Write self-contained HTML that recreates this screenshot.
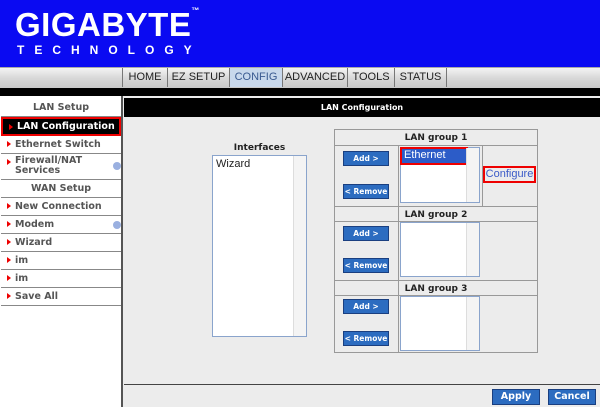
<!DOCTYPE html>
<html><head><style>
*{margin:0;padding:0;box-sizing:border-box}
body{width:600px;height:407px;overflow:hidden;background:#ececec;font-family:"DejaVu Sans","Liberation Sans",sans-serif;position:relative}
.a{position:absolute}
.hdr{left:0;top:0;width:600px;height:67px;background:#0a0af2}
.logo{left:15px;top:6px;color:#fff;font:bold 33px "Liberation Sans",sans-serif;letter-spacing:0.5px}
.tech{left:17px;top:43px;color:#fff;font:bold 12px "Liberation Sans",sans-serif;letter-spacing:10px}
.nav{left:0;top:67px;width:600px;height:21px;background:linear-gradient(#f4f4f4,#d8d8d8 50%,#c8c8c8);border-top:1px solid #aaa}
.tab{top:68px;height:19px;font:11px "Liberation Sans",sans-serif;color:#222;text-align:center;line-height:19px;border-left:1px solid #777}
.blk{left:0;top:88px;width:600px;height:8px;background:#000}
.side{left:0;top:96px;width:123px;height:311px;background:#fff;border-right:2px solid #555}
.si{left:1px;width:120px;font:bold 9.5px "DejaVu Sans",sans-serif;color:#555;border-bottom:1px solid #888;padding-left:14px;line-height:17px}
.si:before{content:"";position:absolute;left:6px;top:5px;border-left:4px solid #e00;border-top:3.5px solid transparent;border-bottom:3.5px solid transparent}
.sh{left:1px;width:120px;font:bold 9.5px "DejaVu Sans",sans-serif;color:#555;text-align:center;border-bottom:1px solid #888}
.dot{width:8px;height:8px;border-radius:50%;background:#9ab0e0;right:4px}
.bar{left:124px;top:98px;width:476px;height:19px;background:#000;color:#fff;font:bold 8px "DejaVu Sans",sans-serif;text-align:center;line-height:19px}
.lb{background:#fff;border:1px solid #8aa4cc}
.sb{position:absolute;right:0;top:0;width:13px;height:100%;background:#f4f4f4;border-left:1px solid #ddd}
.btn{background:#2c6cc0;color:#fff;font:bold 7.5px "DejaVu Sans",sans-serif;text-align:center;line-height:13px;border:1px solid #1a3f80;white-space:nowrap;overflow:hidden}
.gh{left:335px;width:202px;height:16px;font:bold 9px "DejaVu Sans",sans-serif;color:#222;text-align:center;line-height:16px;border-bottom:1px solid #999}
</style></head><body>
<div class="a hdr"></div>
<div class="a logo">GIGABYTE<span style="font-size:8px;vertical-align:top">™</span></div>
<div class="a tech">TECHNOLOGY</div>
<div class="a nav"></div>
<div class="a tab" style="left:122px;width:45px">HOME</div>
<div class="a tab" style="left:167px;width:62px">EZ SETUP</div>
<div class="a tab" style="left:229px;width:53px;background:#c8d8ec;color:#3a5a90">CONFIG</div>
<div class="a tab" style="left:282px;width:65px">ADVANCED</div>
<div class="a tab" style="left:347px;width:47px">TOOLS</div>
<div class="a tab" style="left:394px;width:53px;border-right:1px solid #777">STATUS</div>
<div class="a blk"></div>
<div class="a side"></div>
<div class="a sh" style="top:98px;height:19px;line-height:19px">LAN Setup</div>
<div class="a si" style="top:117px;height:19px;background:#000;color:#fff;border:2px solid #e00;line-height:15px">LAN Configuration</div>
<div class="a si" style="top:136px;height:18px">Ethernet Switch</div>
<div class="a si" style="top:154px;height:26px;line-height:10px;padding-top:2px">Firewall/NAT<br>Services</div>
<div class="a dot" style="left:113px;top:162px"></div>
<div class="a sh" style="top:180px;height:18px;line-height:17px">WAN Setup</div>
<div class="a si" style="top:198px;height:18px">New Connection</div>
<div class="a si" style="top:216px;height:18px">Modem</div>
<div class="a dot" style="left:113px;top:221px"></div>
<div class="a si" style="top:234px;height:18px">Wizard</div>
<div class="a si" style="top:252px;height:18px">im</div>
<div class="a si" style="top:270px;height:18px">im</div>
<div class="a si" style="top:288px;height:18px">Save All</div>
<div class="a bar">LAN Configuration</div>
<div class="a" style="left:212px;top:143px;width:95px;text-align:center;font:bold 9px 'DejaVu Sans',sans-serif;color:#222">Interfaces</div>
<div class="a lb" style="left:212px;top:155px;width:95px;height:182px"><div style="font:11px 'Liberation Sans',sans-serif;padding:2px 3px;color:#222">Wizard</div><div class="sb"></div></div>
<div class="a" style="left:334px;top:129px;width:204px;height:224px;border:1px solid #999"></div>
<div class="a gh" style="top:130px">LAN group 1</div>
<div class="a gh" style="top:206px;border-top:1px solid #999">LAN group 2</div>
<div class="a gh" style="top:280px;border-top:1px solid #999">LAN group 3</div>
<div class="a" style="left:398px;top:146px;width:1px;height:206px;background:#999"></div>
<div class="a" style="left:482px;top:146px;width:1px;height:60px;background:#999"></div>
<div class="a lb" style="left:400px;top:147px;width:80px;height:56px"><div style="margin:1px;width:64px;height:14px;background:#2c5cc8;color:#fff;font:11px 'Liberation Sans',sans-serif;line-height:13px;padding-left:2px;outline:2px solid #e00">Ethernet</div><div class="sb"></div></div>
<div class="a lb" style="left:400px;top:222px;width:80px;height:55px"><div class="sb"></div></div>
<div class="a lb" style="left:400px;top:296px;width:80px;height:55px"><div class="sb"></div></div>
<div class="a" style="left:483px;top:166px;width:53px;height:17px;border:2px solid #e00;font:11px 'Liberation Sans',sans-serif;color:#3a5ac8;line-height:13px;text-align:center">Configure</div>
<div class="a btn" style="left:343px;top:151px;width:46px;height:15px">Add &gt;</div>
<div class="a btn" style="left:343px;top:184px;width:46px;height:15px">&lt; Remove</div>
<div class="a btn" style="left:343px;top:226px;width:46px;height:15px">Add &gt;</div>
<div class="a btn" style="left:343px;top:258px;width:46px;height:15px">&lt; Remove</div>
<div class="a btn" style="left:343px;top:299px;width:46px;height:15px">Add &gt;</div>
<div class="a btn" style="left:343px;top:331px;width:46px;height:15px">&lt; Remove</div>
<div class="a" style="left:124px;top:384px;width:476px;height:1px;background:#444"></div>
<div class="a btn" style="left:492px;top:389px;width:48px;height:16px;font-size:9.5px;line-height:14px">Apply</div>
<div class="a btn" style="left:548px;top:389px;width:48px;height:16px;font-size:9.5px;line-height:14px">Cancel</div>
</body></html>
